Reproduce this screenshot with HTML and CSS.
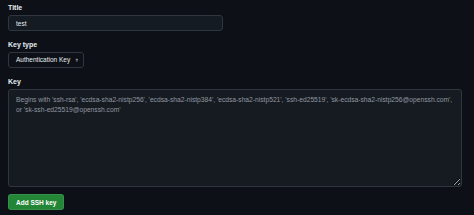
FILE: index.html
```html
<!DOCTYPE html>
<html lang="en">
<head>
  <meta charset="UTF-8">
  <meta name="viewport" content="width=device-width, initial-scale=1.0">
  <title>Add new SSH key</title>
  <link rel="stylesheet" href="styles.css">
</head>
<body>
  <form class="key-form">
    <div class="form-group">
      <label class="form-group__label" for="key-title">Title</label>
      <input id="key-title" class="form-control form-control--title" type="text" value="test">
    </div>
    <div class="form-group">
      <label class="form-group__label">Key type</label>
      <div class="form-select">
        <span class="form-select__text">Authentication Key</span>
        <svg class="form-select__icon" viewBox="0 0 16 16" width="6" height="6" aria-hidden="true">
          <path fill="currentColor" d="m4.074 9.427 3.396 3.396a.25.25 0 0 0 .354 0l3.396-3.396A.25.25 0 0 0 11.043 9H4.251a.25.25 0 0 0-.177.427Zm0-1.957L7.47 4.073a.25.25 0 0 1 .354 0L11.220 7.470a.25.25 0 0 1-.177.426H4.251a.25.25 0 0 1-.177-.426Z"/>
        </svg>
      </div>
    </div>
    <div class="form-group">
      <label class="form-group__label" for="key-body">Key</label>
      <textarea id="key-body" class="form-control form-control--key" placeholder="Begins with 'ssh-rsa', 'ecdsa-sha2-nistp256', 'ecdsa-sha2-nistp384', 'ecdsa-sha2-nistp521', 'ssh-ed25519', 'sk-ecdsa-sha2-nistp256@openssh.com', or 'sk-ssh-ed25519@openssh.com'"></textarea>
    </div>
    <button class="btn-primary" type="button">Add SSH key</button>
  </form>
</body>
</html>
```

FILE: styles.css
```css
/* ssh key form */
body {
  margin: 0;
  background: #0d1117;
  color: #e6edf3;
  font-family: "Liberation Sans", Arial, sans-serif;
  font-size: 6.5px;
}
.key-form {
  width: 454px;
  padding: 3px 0 0 8px;
}
.form-group {
  margin-bottom: 9px;
}
.form-group__label {
  display: block;
  font-size: 7px;
  font-weight: 700;
  line-height: 10px;
  margin-bottom: 2px;
}
.form-control {
  display: block;
  box-sizing: border-box;
  font-family: inherit;
  font-size: 6.5px;
  color: #e6edf3;
  border: 1px solid #30363d;
  border-radius: 3px;
  outline: none;
}
.form-control--title {
  width: 215px;
  height: 16px;
  padding: 0 7px;
  background: #151b23;
}
.form-control--key {
  width: 454px;
  height: 98px;
  padding: 5px 7px;
  font-size: 6.7px;
  line-height: 10px;
  background: #161b22;
  resize: vertical;
}
.form-control--key::placeholder {
  color: #9198a1;
}
.form-select {
  display: flex;
  align-items: center;
  gap: 4px;
  box-sizing: border-box;
  width: 76px;
  height: 16px;
  padding: 0 5px 0 7px;
  border: 1px solid #30363d;
  border-radius: 3px;
  background: #0d1117;
  white-space: nowrap;
}
.form-select__text {
  line-height: 1;
}
.form-select__icon {
  flex-shrink: 0;
  color: #8b949e;
}
.btn-primary {
  display: block;
  margin-top: -2px;
  height: 16px;
  padding: 0 7px;
  border: 1px solid rgba(240, 246, 252, 0.1);
  border-radius: 3px;
  background: #238636;
  color: #fff;
  font-family: inherit;
  font-size: 6.5px;
  font-weight: 700;
}
```
